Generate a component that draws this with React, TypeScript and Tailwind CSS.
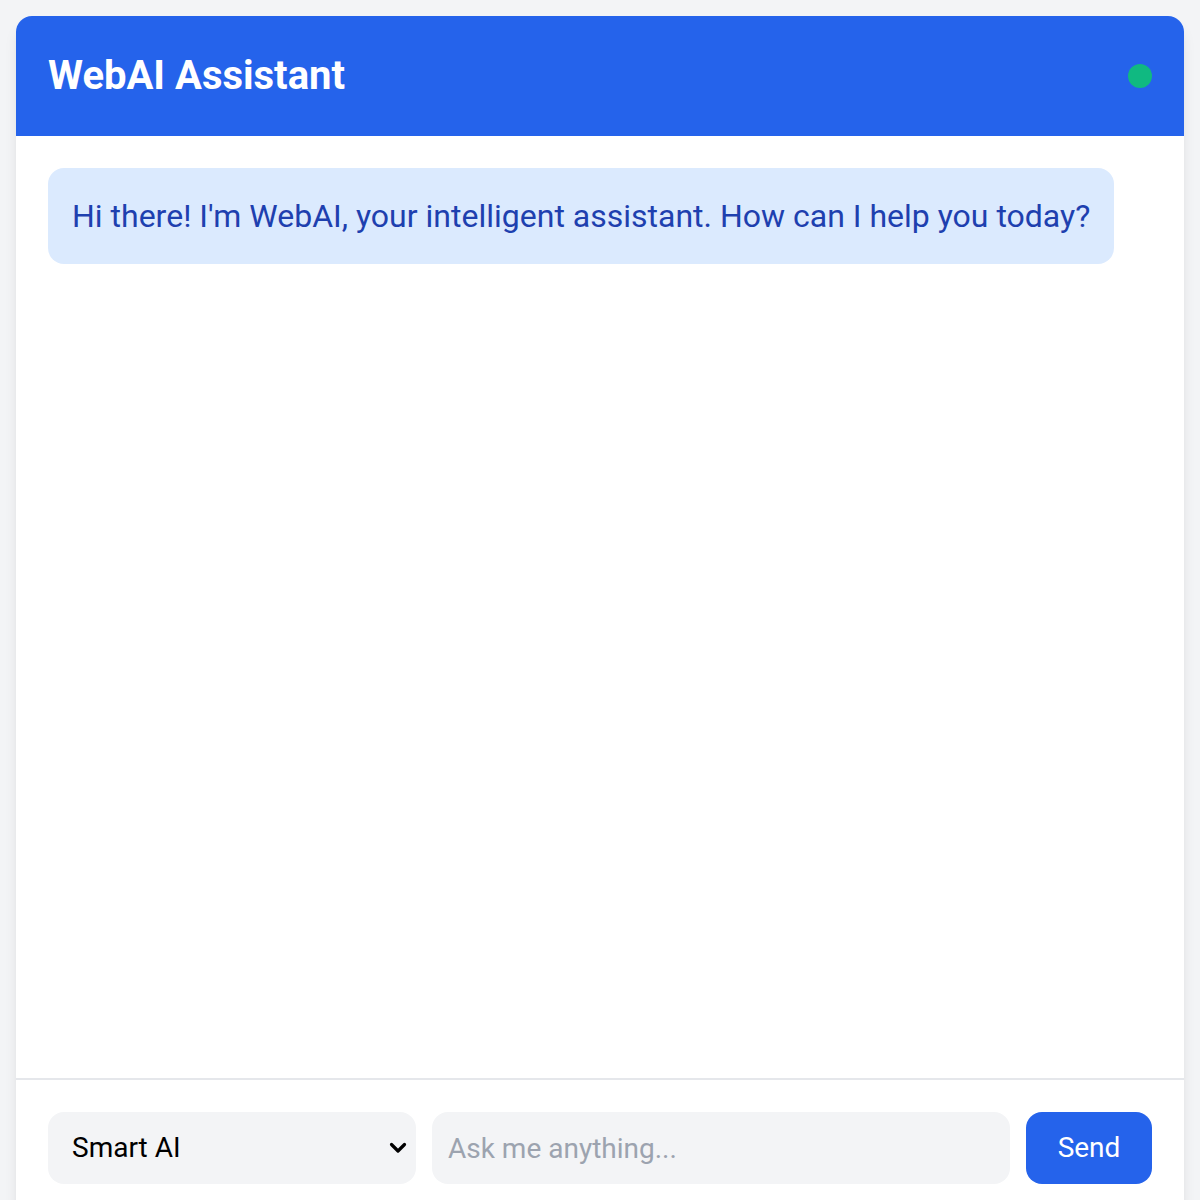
import { useState } from 'react';

export default function App() {
  const [model, setModel] = useState('smart');
  const [text, setText] = useState('');

  return (
    <div className="min-h-screen bg-[#f3f4f6] p-4" style={{ fontFamily: 'Roboto, "Noto Sans", sans-serif' }}>
      <div className="flex h-[1200px] flex-col overflow-hidden rounded-2xl bg-white shadow-lg">
        <header className="flex h-[120px] shrink-0 items-center justify-between bg-[#2563eb] px-8">
          <h1 className="text-[40px] font-bold text-white">WebAI Assistant</h1>
          <span className="h-6 w-6 rounded-full bg-[#10b981]" />
        </header>

        <div className="flex-1 p-8">
          <div className="inline-block rounded-2xl bg-[#dbeafe] px-6 py-6 text-[32px] leading-[48px] text-[#1e40af]">
            Hi there! I'm WebAI, your intelligent assistant. How can I help you today?
          </div>
        </div>

        <div className="flex shrink-0 gap-4 border-t-2 border-[#e5e7eb] p-8">
          <div className="relative w-[368px] shrink-0">
            <select
              value={model}
              onChange={(e) => setModel(e.target.value)}
              className="h-[72px] w-full appearance-none rounded-2xl bg-[#f3f4f6] px-6 text-[28px] text-black outline-none"
            >
              <option value="smart">Smart AI</option>
              <option value="fast">Fast AI</option>
            </select>
            <svg
              className="pointer-events-none absolute right-[8px] top-1/2 h-[20px] w-[20px] -translate-y-1/2"
              viewBox="0 0 20 20"
              fill="none"
              stroke="black"
              strokeWidth="3.2"
              strokeLinecap="round"
              strokeLinejoin="round"
            >
              <path d="M3.5 6.5 10 13l6.5-6.5" />
            </svg>
          </div>
          <input
            value={text}
            onChange={(e) => setText(e.target.value)}
            placeholder="Ask me anything..."
            className="h-[72px] min-w-0 flex-1 rounded-2xl bg-[#f3f4f6] px-4 text-[28px] text-black outline-none placeholder:text-[#9ca3af]"
          />
          <button className="h-[72px] w-[126px] shrink-0 rounded-2xl bg-[#2563eb] text-[28px] text-white">Send</button>
        </div>
      </div>
    </div>
  );
}
